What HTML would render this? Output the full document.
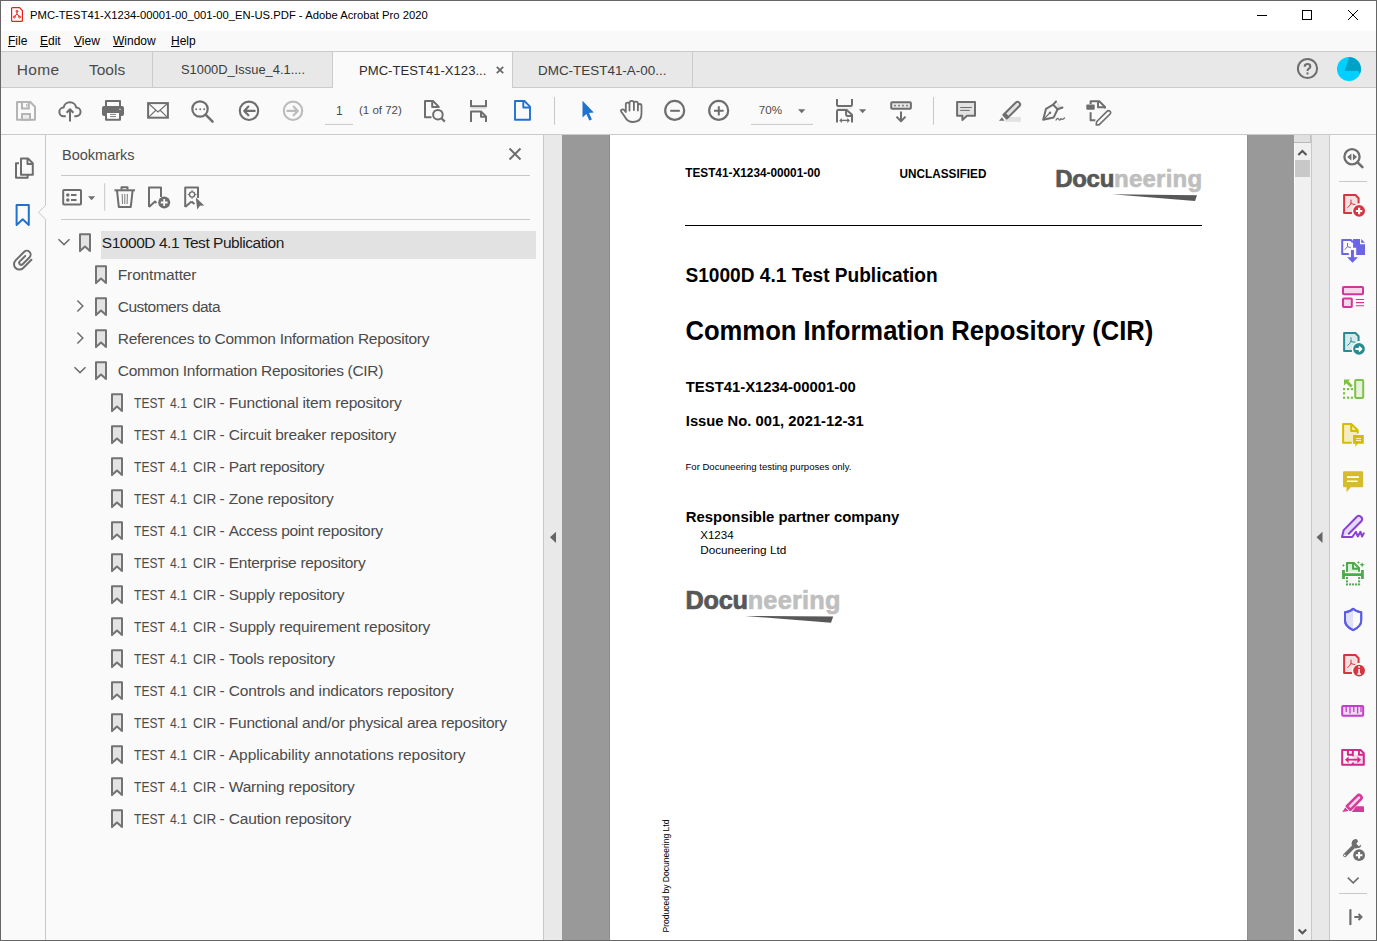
<!DOCTYPE html>
<html><head><meta charset="utf-8">
<style>
html,body{margin:0;padding:0;}
body{width:1377px;height:941px;overflow:hidden;position:relative;background:#fafafa;font-family:"Liberation Sans",sans-serif;}
.a{position:absolute;}
.t{position:absolute;white-space:pre;line-height:1;}
svg{position:absolute;overflow:visible;}
</style></head><body>
<!-- window border -->
<div class="a" style="left:0;top:0;width:1377px;height:941px;box-sizing:border-box;border:1px solid #666666;"></div>
<!-- title bar -->
<div class="a" style="left:1px;top:1px;width:1375px;height:30px;background:#fff;"></div>
<!-- menu bar -->
<div class="a" style="left:1px;top:31px;width:1375px;height:20px;background:#f9f9f9;"></div>
<!-- tab bar -->
<div class="a" style="left:1px;top:51px;width:1375px;height:1px;background:#cbcbcb;"></div>
<div class="a" style="left:1px;top:52px;width:1375px;height:35px;background:#e8e8e8;"></div>
<div class="a" style="left:1px;top:87px;width:1375px;height:1px;background:#cbcbcb;"></div>
<!-- toolbar -->
<div class="a" style="left:1px;top:88px;width:1375px;height:46px;background:#fafafa;"></div>
<div class="a" style="left:1px;top:134px;width:1375px;height:1px;background:#cbcbcb;"></div>
<!-- main -->
<div class="a" style="left:1px;top:135px;width:44px;height:805px;background:#fafafa;"></div>
<div class="a" style="left:45px;top:135px;width:1px;height:805px;background:#c8c8c8;"></div>
<div class="a" style="left:46px;top:135px;width:497px;height:805px;background:#fafafa;"></div>
<div class="a" style="left:543px;top:135px;width:1px;height:805px;background:#c8c8c8;"></div>
<div class="a" style="left:544px;top:135px;width:18px;height:805px;background:#e9e9e9;"></div>
<div class="a" style="left:562px;top:135px;width:732px;height:805px;background:#999999;"></div>
<div class="a" style="left:610px;top:135px;width:637px;height:805px;background:#ffffff;"></div>
<div class="a" style="left:609px;top:135px;width:1px;height:805px;background:#8e8e8e;"></div>
<div class="a" style="left:1247px;top:135px;width:1px;height:805px;background:#8e8e8e;"></div>
<div class="a" style="left:1294px;top:135px;width:17px;height:805px;background:#f0f0f0;"></div>
<div class="a" style="left:1311px;top:135px;width:1px;height:805px;background:#c8c8c8;"></div>
<div class="a" style="left:1312px;top:135px;width:17px;height:805px;background:#e8e8e8;"></div>
<div class="a" style="left:1329px;top:135px;width:1px;height:805px;background:#c8c8c8;"></div>
<div class="a" style="left:1330px;top:135px;width:46px;height:805px;background:#fafafa;"></div>

<!-- TITLE -->
<div class="t" style="left:30px;top:10px;font-size:11.25px;color:#000;">PMC-TEST41-X1234-00001-00_001-00_EN-US.PDF - Adobe Acrobat Pro 2020</div>

<!-- MENU -->
<div class="t" style="left:8px;top:35px;font-size:12px;color:#000;"><u>F</u>ile</div>
<div class="t" style="left:40px;top:35px;font-size:12px;color:#000;"><u>E</u>dit</div>
<div class="t" style="left:74px;top:35px;font-size:12px;color:#000;"><u>V</u>iew</div>
<div class="t" style="left:113px;top:35px;font-size:12px;color:#000;"><u>W</u>indow</div>
<div class="t" style="left:171px;top:35px;font-size:12px;color:#000;"><u>H</u>elp</div>

<!-- TABS -->
<div class="t" style="left:16.8px;top:61.8px;font-size:15.5px;letter-spacing:0.35px;color:#4b4b4b;">Home</div>
<div class="t" style="left:89px;top:61.8px;font-size:15.5px;letter-spacing:0px;color:#4b4b4b;">Tools</div>


<!-- tab dividers / active tab -->
<div class="a" style="left:152px;top:52px;width:1px;height:35px;background:#cbcbcb;"></div>
<div class="a" style="left:332px;top:52px;width:1px;height:35px;background:#cbcbcb;"></div>
<div class="a" style="left:333px;top:52px;width:179px;height:36px;background:#fafafa;"></div>
<div class="a" style="left:512px;top:52px;width:1px;height:35px;background:#cbcbcb;"></div>
<div class="a" style="left:692px;top:52px;width:1px;height:35px;background:#cbcbcb;"></div>
<div class="t" style="left:181px;top:63.5px;font-size:12.9px;color:#3c3c3c;">S1000D_Issue_4.1....</div>
<div class="t" style="left:359px;top:63.5px;font-size:13.1px;color:#2c2c2c;">PMC-TEST41-X123...</div>
<div class="t" style="left:538px;top:63.5px;font-size:13.45px;color:#3c3c3c;">DMC-TEST41-A-00...</div>
<svg width="8" height="8" style="left:496px;top:66px;"><path d="M0.8 0.8 L7.2 7.2 M7.2 0.8 L0.8 7.2" stroke="#6a6a6a" stroke-width="1.8"/></svg>
<!-- help & avatar -->
<svg width="22" height="22" style="left:1297px;top:58px;"><circle cx="10.5" cy="10.5" r="9.6" fill="none" stroke="#6e6e6e" stroke-width="2"/><path d="M7.7 8.7 Q7.7 6 10.5 6 Q13.3 6 13.3 8.4 Q13.3 10 11.6 10.8 Q10.5 11.4 10.5 13" fill="none" stroke="#6e6e6e" stroke-width="2.1"/><circle cx="10.5" cy="15.5" r="1.15" fill="#6e6e6e"/></svg>
<svg width="24" height="24" style="left:1337px;top:57px;"><circle cx="12" cy="12" r="12" fill="#00cfff"/><path d="M7.8 14 L12.1 0 A12 12 0 0 1 23 16.7 L21.3 14 Z" fill="#00a1c6"/></svg>
<!-- window controls -->
<svg width="12" height="12" style="left:1257px;top:10px;"><path d="M0 5.5 H10" stroke="#000" stroke-width="1"/></svg>
<svg width="12" height="12" style="left:1302px;top:10px;"><rect x="0.5" y="0.5" width="9" height="9" fill="none" stroke="#000" stroke-width="1"/></svg>
<svg width="12" height="12" style="left:1348px;top:10px;"><path d="M0 0 L10 10 M10 0 L0 10" stroke="#000" stroke-width="1"/></svg>
<!-- title pdf icon -->
<svg width="14" height="17" style="left:11px;top:7px;"><path d="M1.5 0.6 H8.5 L11.4 3.5 V13.4 Q11.4 14.4 10.4 14.4 H1.5 Q0.6 14.4 0.6 13.4 V1.6 Q0.6 0.6 1.5 0.6 Z" fill="#fff" stroke="#e8211c" stroke-width="1.2"/><path d="M6 4 L6 6.8 M6 6.8 L3.4 10 M6 6.8 L8.6 10" stroke="#e8211c" stroke-width="1"/><circle cx="6" cy="4.3" r="1" fill="none" stroke="#e8211c" stroke-width="0.9"/><circle cx="3.4" cy="10" r="1" fill="none" stroke="#e8211c" stroke-width="0.9"/><circle cx="8.6" cy="10" r="1" fill="none" stroke="#e8211c" stroke-width="0.9"/></svg>


<!-- TOOLBAR ICONS -->
<svg width="1377" height="941" style="left:0;top:0;" fill="none" stroke-linecap="butt">
<g stroke="#b4b4b4" stroke-width="2">
 <path d="M17 102 H30.3 L35 106.7 V119.7 H17 Z" stroke-linejoin="round"/>
 <path d="M22 102 V108.6 H28.8 V102"/>
 <path d="M26.7 104 V106.8" stroke-width="1.2"/>
 <rect x="22" y="114" width="8" height="5.7" fill="#ececec"/>
</g>
<g stroke="#6e6e6e" stroke-width="2" stroke-linejoin="round">
 <path d="M65.8 116.2 H63.7 A4.3 4.3 0 0 1 63.6 107.6 A6.4 6.4 0 0 1 76.2 107.6 A4.3 4.3 0 0 1 76.3 116.2 H74.3"/>
 <path d="M70 121.6 V109.2 M66.6 112.8 L70 109.3 L73.4 112.8" stroke-width="2"/>
</g>
<g fill="#6e6e6e">
 <path d="M104 106 H122 Q124 106 124 108 V114 Q124 116 122 116 H104 Q102 116 102 114 V108 Q102 106 104 106 Z"/>
</g>
<g stroke="#6e6e6e" stroke-width="2" stroke-linejoin="round">
 <path d="M106 106.5 V101 H120 V106.5"/>
 <rect x="106" y="112" width="14" height="7.7" fill="#fff"/>
 <path d="M110 114.4 H116 M110 116.6 H116" stroke-width="0.9"/>
</g>
<rect x="119.2" y="108.8" width="1.6" height="1" fill="#ddd"/>
<g stroke="#6e6e6e">
 <rect x="148.1" y="103.1" width="19.8" height="14.6" stroke-width="2"/>
 <path d="M148.5 103.5 L158 112 L167.5 103.5 M148.5 117.3 L155.6 110.5 M167.5 117.3 L160.4 110.5" stroke-width="1.1"/>
</g>
<g stroke="#6e6e6e">
 <circle cx="200" cy="109" r="7.7" stroke-width="2.2"/>
 <path d="M205.6 114.6 L212.6 121.6" stroke-width="2.5" stroke-linecap="round"/>
</g>
<g fill="#6e6e6e"><circle cx="196.2" cy="109.2" r="0.95"/><circle cx="200.2" cy="109.2" r="0.95"/><circle cx="204.2" cy="109.2" r="0.95"/></g>
<g stroke="#6e6e6e" stroke-width="2.1">
 <circle cx="249" cy="110.8" r="9.2"/>
 <path d="M244.2 110.9 H254.7 M248.4 106.6 L244.2 110.9 L248.4 115.2" stroke-linecap="round" stroke-linejoin="round"/>
</g>
<g stroke="#bcbcbc" stroke-width="2.1">
 <circle cx="293" cy="110.8" r="9.2"/>
 <path d="M297.8 110.9 H287.3 M293.6 106.6 L297.8 110.9 L293.6 115.2" stroke-linecap="round" stroke-linejoin="round"/>
</g>
<path d="M325 124.4 H353" stroke="#c8c8c8" stroke-width="1"/>
<g stroke="#6e6e6e" stroke-width="2" stroke-linejoin="round">
 <path d="M431.5 117.3 H425 V101 H433 L438.6 106.6 V108"/>
 <path d="M432.2 101.5 V107 H438.5"/>
 <circle cx="437.9" cy="114.7" r="4.8"/>
 <path d="M441.5 118.3 L444.8 121.6" stroke-width="2.2"/>
</g>
<g stroke="#6e6e6e" stroke-width="2" stroke-linejoin="round">
 <path d="M471 100 V106.3 H486 V100"/>
 <path d="M471 122 V111.5 H481 L486 116.5 V122"/>
 <path d="M481 112 V116.7 H486"/>
</g>
<path d="M471 108.5 H486" stroke="#e2e2e2" stroke-width="1"/>
<g stroke="#1f72cf" stroke-width="1.9" stroke-linejoin="round">
 <path d="M515 101 H524.4 L530 106.6 V119.7 H515 Z"/>
 <path d="M523.3 101.3 V107.5 H529.7"/>
</g>
<path d="M554.5 97 V124.7" stroke="#c8c8c8" stroke-width="1"/>
<path d="M582.5 100.8 L593.8 112.6 L589 112.9 L591.9 119.4 L589.3 120.6 L586.4 114.1 L582.5 117.6 Z" fill="#1f72cf"/>
<g stroke="#6e6e6e" stroke-width="1.8" stroke-linejoin="round" stroke-linecap="round">
 <path d="M629.5 110.5 V103 Q629.5 100.8 631.7 100.8 Q633.9 100.8 633.9 103 V110 M633.9 103.2 Q633.9 101.6 635.9 101.6 Q637.9 101.6 637.9 103.5 V110.5 M637.9 105.6 Q637.9 104 639.7 104 Q641.5 104 641.5 105.8 V113.5 Q641.5 122 633 122 Q627.5 122 625 117 L621.3 111.8 Q620.3 110.3 621.8 109.6 Q623.3 109 624.6 110.5 L625.8 112 V104.5 Q625.8 102.7 627.6 102.7 Q629.5 102.7 629.5 104.5"/>
</g>
<g stroke="#6e6e6e" stroke-width="2.2">
 <circle cx="674.7" cy="110.4" r="9.5"/>
 <path d="M670.2 110.8 H679.8" stroke-width="2"/>
 <circle cx="718.7" cy="110.4" r="9.5"/>
 <path d="M714 110.8 H723.6 M718.8 106.2 V115.6" stroke-width="2"/>
</g>
<path d="M751 124.4 H813" stroke="#c8c8c8" stroke-width="1"/>
<path d="M798 109.2 H805.4 L801.7 113.3 Z" fill="#6e6e6e"/>
<g stroke="#6e6e6e" stroke-width="2" stroke-linejoin="round">
 <path d="M837 99 V104.8 Q837 106 838.2 106 H850.8 Q852 106 852 104.8 V99"/>
 <path d="M837 122.6 V111.2 Q837 110 838.2 110 H846.7 L852 114.8 V122.6"/>
 <path d="M846.1 110.5 V114.8 Q846.1 115.9 847.2 115.9 H851.6"/>
 <path d="M841 120.4 H848.2" stroke-width="1.4"/>
</g>
<path d="M839.2 120.4 L841.8 117.9 V122.9 Z M849.9 120.4 L847.3 117.9 V122.9 Z" fill="#6e6e6e"/>
<path d="M837 108.3 H852" stroke="#e2e2e2" stroke-width="1"/>
<path d="M859 109.3 H866.2 L862.6 113.2 Z" fill="#6e6e6e"/>
<g stroke="#6e6e6e" stroke-width="2" stroke-linejoin="round">
 <rect x="891.2" y="102.2" width="19.7" height="6.6" rx="1" fill="#e6e6e6"/>
 <path d="M901 111.5 V121 M896.5 116.6 L901 121.2 L905.5 116.6" stroke-linejoin="round"/>
</g>
<g fill="#6e6e6e"><rect x="894.2" y="104.8" width="1.6" height="1.6"/><rect x="898.2" y="104.8" width="1.6" height="1.6"/><rect x="902.2" y="104.8" width="1.6" height="1.6"/><rect x="906.2" y="104.8" width="1.6" height="1.6"/></g>
<path d="M933.5 97 V124.7" stroke="#c8c8c8" stroke-width="1"/>
<g stroke="#6e6e6e" stroke-width="2" stroke-linejoin="round">
 <path d="M957.1 102 H975 V115.7 H967 L962.4 120 V115.7 H957.1 Z" fill="#e2e2e2"/>
 <path d="M960.2 107.5 H971.8 M960.2 110.4 H969.8" stroke-width="1"/>
</g>
<path d="M1005.2 117 H1020.9 V121.8 H1005.2 Z" fill="#e2e2e2"/>
<g stroke="#6e6e6e" stroke-width="2" stroke-linejoin="round">
 <path d="M1003.5 114.8 L1015.6 102.7 Q1017.5 100.8 1019.3 102.6 Q1021.1 104.4 1019.2 106.3 L1007.1 118.4 Z" fill="#e2e2e2"/>
</g>
<path d="M1002.5 115.6 L1006.3 119.4 L1009.2 116.5 L1005.4 112.7 Z" fill="#6e6e6e"/>
<path d="M999 120.8 L1002 117.3 L1004.5 120.8 Z" fill="#6e6e6e"/>
<g stroke="#6e6e6e" stroke-width="2" stroke-linejoin="round" stroke-linecap="round">
 <path d="M1056.2 101.2 L1062.6 107.6 L1057.8 109.1 Z" fill="#e2e2e2" stroke="none"/>
 <path d="M1056 101.5 L1053.2 104.7 L1057.6 109.2 L1062.5 107.5"/>
 <path d="M1053.2 104.7 L1046 108.8 L1043.2 119.8 L1053.6 117.6 L1057.6 109.2"/>
 <path d="M1043.8 119.2 L1049.8 113" stroke-width="1.2"/>
 <path d="M1056 120 Q1058 117 1059 119.5 Q1060 121 1061 118.5 Q1062 120.5 1064.5 118" stroke-width="1.3"/>
</g>
<circle cx="1050" cy="112.8" r="1.2" fill="#6e6e6e"/>
<g stroke="#6e6e6e" stroke-width="2" stroke-linejoin="round">
 <path d="M1090.6 104 V101.3 H1099.3 L1105 107 V108.5"/>
 <path d="M1098 101.5 V107.3 H1104.8"/>
 <path d="M1090.6 112.3 V120.2 H1095.3"/>
 <path d="M1107 111.4 Q1108.6 109.8 1110 111.2 Q1111.4 112.6 1109.8 114.2 L1099.3 124.6 L1096.2 125 L1096.6 121.8 Z" stroke-width="1.6"/>
</g>
<rect x="1086.3" y="104.5" width="8.4" height="5.2" rx="1" fill="#6e6e6e"/>
</svg>
<div class="t" style="left:336px;top:105px;font-size:12px;color:#4b4b4b;">1</div>
<div class="t" style="left:359px;top:105px;font-size:11.5px;color:#4b4b4b;">(1 of 72)</div>
<div class="t" style="left:758.8px;top:104px;font-size:11.6px;color:#4b4b4b;">70%</div>


<!-- BOOKMARKS PANEL -->
<div class="a" style="left:101px;top:231px;width:435px;height:28px;background:#e2e2e2;"></div>
<div class="t" style="left:62px;top:147.5px;font-size:14.5px;color:#4b4b4b;">Bookmarks</div>
<div class="a" style="left:61px;top:175px;width:469px;height:1px;background:#c8c8c8;"></div>
<div class="a" style="left:61px;top:219px;width:469px;height:1px;background:#c8c8c8;"></div>
<svg width="1377" height="941" style="left:0;top:0;" fill="none">
<path d="M509.5 148.5 L520.5 159.5 M520.5 148.5 L509.5 159.5" stroke="#6e6e6e" stroke-width="2"/>
<g stroke="#6e6e6e" stroke-width="2">
 <rect x="63.2" y="190" width="17.8" height="14.6" rx="0.8"/>
 <path d="M71 194.9 H76.5 M71 200 H76.5" stroke-width="2"/>
</g>
<circle cx="67.8" cy="194.9" r="1.75" fill="#6e6e6e"/><circle cx="67.8" cy="200" r="1.75" fill="#6e6e6e"/>
<path d="M88 196.2 H95.2 L91.6 200.2 Z" fill="#6e6e6e"/>
<path d="M104.7 183.3 V210.8" stroke="#c8c8c8" stroke-width="1"/>
<g stroke="#6e6e6e" stroke-width="2" stroke-linejoin="round">
 <path d="M114.5 190.3 H135"/>
 <path d="M121.5 189.8 V187.2 H127.5 V189.8"/>
 <path d="M117 190.5 L118.8 206.9 H130.8 L132.6 190.5"/>
 <path d="M122.2 194 L122.5 204 M124.8 194 V204 M127.4 194 L127.1 204" stroke-width="0.9"/>
</g>
<g stroke="#6e6e6e" stroke-width="2" stroke-linejoin="round">
 <path d="M149 207 V187.4 H161 V197 M156.5 203 L155 201.6 L149 207"/>
</g>
<circle cx="164.2" cy="202.5" r="6" fill="#6e6e6e"/>
<path d="M160.8 202.5 H167.6 M164.2 199.1 V205.9" stroke="#fafafa" stroke-width="1.8"/>
<g stroke="#6e6e6e" stroke-width="2" stroke-linejoin="round">
 <path d="M185.2 207 V187.4 H198 V198 M191.5 201.6 L185.2 207 M191.5 201.6 L194.5 204"/>
 <circle cx="192.1" cy="194.5" r="2.6" stroke-width="1.4"/>
 <path d="M192.1 190.2 V191.6 M192.1 197.4 V198.8 M187.8 194.5 H189.2 M195 194.5 H196.4" stroke-width="1.2"/>
</g>
<path d="M195.8 197.5 L204.2 205.6 L200 205.8 L197.2 209.5 Z" fill="#6e6e6e"/>
<path d="M80 251.1 V234.3 H90 V251.1 L85.0 246.5 Z" fill="#e3e3e3" stroke="#737373" stroke-width="2" stroke-linejoin="round"/>
<path d="M58.5 239.2 L64 244.6 L69.5 239.2" fill="none" stroke="#6e6e6e" stroke-width="1.5"/>
<path d="M96 283.09999999999997 V266.3 H106 V283.09999999999997 L101.0 278.5 Z" fill="#e3e3e3" stroke="#737373" stroke-width="2" stroke-linejoin="round"/>
<path d="M96 315.09999999999997 V298.3 H106 V315.09999999999997 L101.0 310.5 Z" fill="#e3e3e3" stroke="#737373" stroke-width="2" stroke-linejoin="round"/>
<path d="M77.4 300.5 L82.8 306 L77.4 311.5" fill="none" stroke="#6e6e6e" stroke-width="1.5"/>
<path d="M96 347.09999999999997 V330.3 H106 V347.09999999999997 L101.0 342.5 Z" fill="#e3e3e3" stroke="#737373" stroke-width="2" stroke-linejoin="round"/>
<path d="M77.4 332.5 L82.8 338 L77.4 343.5" fill="none" stroke="#6e6e6e" stroke-width="1.5"/>
<path d="M96 379.09999999999997 V362.3 H106 V379.09999999999997 L101.0 374.5 Z" fill="#e3e3e3" stroke="#737373" stroke-width="2" stroke-linejoin="round"/>
<path d="M74.5 367.2 L80 372.6 L85.5 367.2" fill="none" stroke="#6e6e6e" stroke-width="1.5"/>
<path d="M112 411.09999999999997 V394.3 H122 V411.09999999999997 L117.0 406.5 Z" fill="#e3e3e3" stroke="#737373" stroke-width="2" stroke-linejoin="round"/>
<path d="M112 443.09999999999997 V426.3 H122 V443.09999999999997 L117.0 438.5 Z" fill="#e3e3e3" stroke="#737373" stroke-width="2" stroke-linejoin="round"/>
<path d="M112 475.09999999999997 V458.3 H122 V475.09999999999997 L117.0 470.5 Z" fill="#e3e3e3" stroke="#737373" stroke-width="2" stroke-linejoin="round"/>
<path d="M112 507.09999999999997 V490.3 H122 V507.09999999999997 L117.0 502.5 Z" fill="#e3e3e3" stroke="#737373" stroke-width="2" stroke-linejoin="round"/>
<path d="M112 539.1 V522.3 H122 V539.1 L117.0 534.5 Z" fill="#e3e3e3" stroke="#737373" stroke-width="2" stroke-linejoin="round"/>
<path d="M112 571.1 V554.3 H122 V571.1 L117.0 566.5 Z" fill="#e3e3e3" stroke="#737373" stroke-width="2" stroke-linejoin="round"/>
<path d="M112 603.1 V586.3 H122 V603.1 L117.0 598.5 Z" fill="#e3e3e3" stroke="#737373" stroke-width="2" stroke-linejoin="round"/>
<path d="M112 635.1 V618.3 H122 V635.1 L117.0 630.5 Z" fill="#e3e3e3" stroke="#737373" stroke-width="2" stroke-linejoin="round"/>
<path d="M112 667.1 V650.3 H122 V667.1 L117.0 662.5 Z" fill="#e3e3e3" stroke="#737373" stroke-width="2" stroke-linejoin="round"/>
<path d="M112 699.1 V682.3 H122 V699.1 L117.0 694.5 Z" fill="#e3e3e3" stroke="#737373" stroke-width="2" stroke-linejoin="round"/>
<path d="M112 731.1 V714.3 H122 V731.1 L117.0 726.5 Z" fill="#e3e3e3" stroke="#737373" stroke-width="2" stroke-linejoin="round"/>
<path d="M112 763.1 V746.3 H122 V763.1 L117.0 758.5 Z" fill="#e3e3e3" stroke="#737373" stroke-width="2" stroke-linejoin="round"/>
<path d="M112 795.1 V778.3 H122 V795.1 L117.0 790.5 Z" fill="#e3e3e3" stroke="#737373" stroke-width="2" stroke-linejoin="round"/>
<path d="M112 827.1 V810.3 H122 V827.1 L117.0 822.5 Z" fill="#e3e3e3" stroke="#737373" stroke-width="2" stroke-linejoin="round"/>
</svg>
<!--BMTEXT-->
<div class="t" style="left:101.8px;top:234.9px;font-size:15.5px;color:#1c1c1c;letter-spacing:-0.459px;">S1000D 4.1 Test Publication</div>
<div class="t" style="left:117.8px;top:266.9px;font-size:15.5px;color:#4b4b4b;letter-spacing:-0.145px;">Frontmatter</div>
<div class="t" style="left:117.8px;top:298.9px;font-size:15.5px;color:#4b4b4b;letter-spacing:-0.514px;">Customers data</div>
<div class="t" style="left:117.8px;top:330.9px;font-size:15.5px;color:#4b4b4b;letter-spacing:-0.293px;">References to Common Information Repository</div>
<div class="t" style="left:117.8px;top:362.9px;font-size:15.5px;color:#4b4b4b;letter-spacing:-0.303px;">Common Information Repositories (CIR)</div>
<div class="t" style="left:134.4px;top:394.9px;font-size:15.5px;color:#4b4b4b;transform:scaleX(0.78);transform-origin:0 0;">TEST</div>
<div class="t" style="left:170.1px;top:394.9px;font-size:15.5px;color:#4b4b4b;transform:scaleX(0.79);transform-origin:0 0;">4.1</div>
<div class="t" style="left:192.6px;top:394.9px;font-size:15.5px;color:#4b4b4b;transform:scaleX(0.87);transform-origin:0 0;">CIR</div>
<div class="t" style="left:219.6px;top:394.9px;font-size:15.5px;color:#4b4b4b;transform:scaleX(1.0);transform-origin:0 0;">-</div>
<div class="t" style="left:228.8px;top:394.9px;font-size:15.5px;color:#4b4b4b;letter-spacing:-0.185px;">Functional item repository</div>
<div class="t" style="left:134.4px;top:426.9px;font-size:15.5px;color:#4b4b4b;transform:scaleX(0.78);transform-origin:0 0;">TEST</div>
<div class="t" style="left:170.1px;top:426.9px;font-size:15.5px;color:#4b4b4b;transform:scaleX(0.79);transform-origin:0 0;">4.1</div>
<div class="t" style="left:192.6px;top:426.9px;font-size:15.5px;color:#4b4b4b;transform:scaleX(0.87);transform-origin:0 0;">CIR</div>
<div class="t" style="left:219.6px;top:426.9px;font-size:15.5px;color:#4b4b4b;transform:scaleX(1.0);transform-origin:0 0;">-</div>
<div class="t" style="left:228.8px;top:426.9px;font-size:15.5px;color:#4b4b4b;letter-spacing:-0.231px;">Circuit breaker repository</div>
<div class="t" style="left:134.4px;top:458.9px;font-size:15.5px;color:#4b4b4b;transform:scaleX(0.78);transform-origin:0 0;">TEST</div>
<div class="t" style="left:170.1px;top:458.9px;font-size:15.5px;color:#4b4b4b;transform:scaleX(0.79);transform-origin:0 0;">4.1</div>
<div class="t" style="left:192.6px;top:458.9px;font-size:15.5px;color:#4b4b4b;transform:scaleX(0.87);transform-origin:0 0;">CIR</div>
<div class="t" style="left:219.6px;top:458.9px;font-size:15.5px;color:#4b4b4b;transform:scaleX(1.0);transform-origin:0 0;">-</div>
<div class="t" style="left:228.8px;top:458.9px;font-size:15.5px;color:#4b4b4b;letter-spacing:-0.360px;">Part repository</div>
<div class="t" style="left:134.4px;top:490.9px;font-size:15.5px;color:#4b4b4b;transform:scaleX(0.78);transform-origin:0 0;">TEST</div>
<div class="t" style="left:170.1px;top:490.9px;font-size:15.5px;color:#4b4b4b;transform:scaleX(0.79);transform-origin:0 0;">4.1</div>
<div class="t" style="left:192.6px;top:490.9px;font-size:15.5px;color:#4b4b4b;transform:scaleX(0.87);transform-origin:0 0;">CIR</div>
<div class="t" style="left:219.6px;top:490.9px;font-size:15.5px;color:#4b4b4b;transform:scaleX(1.0);transform-origin:0 0;">-</div>
<div class="t" style="left:228.8px;top:490.9px;font-size:15.5px;color:#4b4b4b;letter-spacing:-0.200px;">Zone repository</div>
<div class="t" style="left:134.4px;top:522.9px;font-size:15.5px;color:#4b4b4b;transform:scaleX(0.78);transform-origin:0 0;">TEST</div>
<div class="t" style="left:170.1px;top:522.9px;font-size:15.5px;color:#4b4b4b;transform:scaleX(0.79);transform-origin:0 0;">4.1</div>
<div class="t" style="left:192.6px;top:522.9px;font-size:15.5px;color:#4b4b4b;transform:scaleX(0.87);transform-origin:0 0;">CIR</div>
<div class="t" style="left:219.6px;top:522.9px;font-size:15.5px;color:#4b4b4b;transform:scaleX(1.0);transform-origin:0 0;">-</div>
<div class="t" style="left:228.8px;top:522.9px;font-size:15.5px;color:#4b4b4b;letter-spacing:-0.270px;">Access point repository</div>
<div class="t" style="left:134.4px;top:554.9px;font-size:15.5px;color:#4b4b4b;transform:scaleX(0.78);transform-origin:0 0;">TEST</div>
<div class="t" style="left:170.1px;top:554.9px;font-size:15.5px;color:#4b4b4b;transform:scaleX(0.79);transform-origin:0 0;">4.1</div>
<div class="t" style="left:192.6px;top:554.9px;font-size:15.5px;color:#4b4b4b;transform:scaleX(0.87);transform-origin:0 0;">CIR</div>
<div class="t" style="left:219.6px;top:554.9px;font-size:15.5px;color:#4b4b4b;transform:scaleX(1.0);transform-origin:0 0;">-</div>
<div class="t" style="left:228.8px;top:554.9px;font-size:15.5px;color:#4b4b4b;letter-spacing:-0.305px;">Enterprise repository</div>
<div class="t" style="left:134.4px;top:586.9px;font-size:15.5px;color:#4b4b4b;transform:scaleX(0.78);transform-origin:0 0;">TEST</div>
<div class="t" style="left:170.1px;top:586.9px;font-size:15.5px;color:#4b4b4b;transform:scaleX(0.79);transform-origin:0 0;">4.1</div>
<div class="t" style="left:192.6px;top:586.9px;font-size:15.5px;color:#4b4b4b;transform:scaleX(0.87);transform-origin:0 0;">CIR</div>
<div class="t" style="left:219.6px;top:586.9px;font-size:15.5px;color:#4b4b4b;transform:scaleX(1.0);transform-origin:0 0;">-</div>
<div class="t" style="left:228.8px;top:586.9px;font-size:15.5px;color:#4b4b4b;letter-spacing:-0.247px;">Supply repository</div>
<div class="t" style="left:134.4px;top:618.9px;font-size:15.5px;color:#4b4b4b;transform:scaleX(0.78);transform-origin:0 0;">TEST</div>
<div class="t" style="left:170.1px;top:618.9px;font-size:15.5px;color:#4b4b4b;transform:scaleX(0.79);transform-origin:0 0;">4.1</div>
<div class="t" style="left:192.6px;top:618.9px;font-size:15.5px;color:#4b4b4b;transform:scaleX(0.87);transform-origin:0 0;">CIR</div>
<div class="t" style="left:219.6px;top:618.9px;font-size:15.5px;color:#4b4b4b;transform:scaleX(1.0);transform-origin:0 0;">-</div>
<div class="t" style="left:228.8px;top:618.9px;font-size:15.5px;color:#4b4b4b;letter-spacing:-0.186px;">Supply requirement repository</div>
<div class="t" style="left:134.4px;top:650.9px;font-size:15.5px;color:#4b4b4b;transform:scaleX(0.78);transform-origin:0 0;">TEST</div>
<div class="t" style="left:170.1px;top:650.9px;font-size:15.5px;color:#4b4b4b;transform:scaleX(0.79);transform-origin:0 0;">4.1</div>
<div class="t" style="left:192.6px;top:650.9px;font-size:15.5px;color:#4b4b4b;transform:scaleX(0.87);transform-origin:0 0;">CIR</div>
<div class="t" style="left:219.6px;top:650.9px;font-size:15.5px;color:#4b4b4b;transform:scaleX(1.0);transform-origin:0 0;">-</div>
<div class="t" style="left:228.8px;top:650.9px;font-size:15.5px;color:#4b4b4b;letter-spacing:-0.163px;">Tools repository</div>
<div class="t" style="left:134.4px;top:682.9px;font-size:15.5px;color:#4b4b4b;transform:scaleX(0.78);transform-origin:0 0;">TEST</div>
<div class="t" style="left:170.1px;top:682.9px;font-size:15.5px;color:#4b4b4b;transform:scaleX(0.79);transform-origin:0 0;">4.1</div>
<div class="t" style="left:192.6px;top:682.9px;font-size:15.5px;color:#4b4b4b;transform:scaleX(0.87);transform-origin:0 0;">CIR</div>
<div class="t" style="left:219.6px;top:682.9px;font-size:15.5px;color:#4b4b4b;transform:scaleX(1.0);transform-origin:0 0;">-</div>
<div class="t" style="left:228.8px;top:682.9px;font-size:15.5px;color:#4b4b4b;letter-spacing:-0.182px;">Controls and indicators repository</div>
<div class="t" style="left:134.4px;top:714.9px;font-size:15.5px;color:#4b4b4b;transform:scaleX(0.78);transform-origin:0 0;">TEST</div>
<div class="t" style="left:170.1px;top:714.9px;font-size:15.5px;color:#4b4b4b;transform:scaleX(0.79);transform-origin:0 0;">4.1</div>
<div class="t" style="left:192.6px;top:714.9px;font-size:15.5px;color:#4b4b4b;transform:scaleX(0.87);transform-origin:0 0;">CIR</div>
<div class="t" style="left:219.6px;top:714.9px;font-size:15.5px;color:#4b4b4b;transform:scaleX(1.0);transform-origin:0 0;">-</div>
<div class="t" style="left:228.8px;top:714.9px;font-size:15.5px;color:#4b4b4b;letter-spacing:-0.233px;">Functional and/or physical area repository</div>
<div class="t" style="left:134.4px;top:746.9px;font-size:15.5px;color:#4b4b4b;transform:scaleX(0.78);transform-origin:0 0;">TEST</div>
<div class="t" style="left:170.1px;top:746.9px;font-size:15.5px;color:#4b4b4b;transform:scaleX(0.79);transform-origin:0 0;">4.1</div>
<div class="t" style="left:192.6px;top:746.9px;font-size:15.5px;color:#4b4b4b;transform:scaleX(0.87);transform-origin:0 0;">CIR</div>
<div class="t" style="left:219.6px;top:746.9px;font-size:15.5px;color:#4b4b4b;transform:scaleX(1.0);transform-origin:0 0;">-</div>
<div class="t" style="left:228.8px;top:746.9px;font-size:15.5px;color:#4b4b4b;letter-spacing:-0.056px;">Applicability annotations repository</div>
<div class="t" style="left:134.4px;top:778.9px;font-size:15.5px;color:#4b4b4b;transform:scaleX(0.78);transform-origin:0 0;">TEST</div>
<div class="t" style="left:170.1px;top:778.9px;font-size:15.5px;color:#4b4b4b;transform:scaleX(0.79);transform-origin:0 0;">4.1</div>
<div class="t" style="left:192.6px;top:778.9px;font-size:15.5px;color:#4b4b4b;transform:scaleX(0.87);transform-origin:0 0;">CIR</div>
<div class="t" style="left:219.6px;top:778.9px;font-size:15.5px;color:#4b4b4b;transform:scaleX(1.0);transform-origin:0 0;">-</div>
<div class="t" style="left:228.8px;top:778.9px;font-size:15.5px;color:#4b4b4b;letter-spacing:-0.211px;">Warning repository</div>
<div class="t" style="left:134.4px;top:810.9px;font-size:15.5px;color:#4b4b4b;transform:scaleX(0.78);transform-origin:0 0;">TEST</div>
<div class="t" style="left:170.1px;top:810.9px;font-size:15.5px;color:#4b4b4b;transform:scaleX(0.79);transform-origin:0 0;">4.1</div>
<div class="t" style="left:192.6px;top:810.9px;font-size:15.5px;color:#4b4b4b;transform:scaleX(0.87);transform-origin:0 0;">CIR</div>
<div class="t" style="left:219.6px;top:810.9px;font-size:15.5px;color:#4b4b4b;transform:scaleX(1.0);transform-origin:0 0;">-</div>
<div class="t" style="left:228.8px;top:810.9px;font-size:15.5px;color:#4b4b4b;letter-spacing:-0.189px;">Caution repository</div>
<!--/BMTEXT-->
<!-- LEFT NAV -->
<svg width="1377" height="941" style="left:0;top:0;" fill="none">
<g stroke="#6e6e6e" stroke-width="2" stroke-linejoin="round">
 <path d="M21 158.5 H28 L32.8 163.3 V174.8 H21 Z"/>
 <path d="M27.5 158.8 V164 H32.5"/>
 <path d="M19 163.2 H16 V177.7 H27.6 V175"/>
</g>
<path d="M16.6 204.9 H28.8 V225 L22.7 219.3 L16.6 225 Z" stroke="#1f72cf" stroke-width="2" stroke-linejoin="round"/>
<path d="M31.4 259.8 L23.2 268 A5.37 5.37 0 0 1 15.6 260.4 L24.2 251.8 A3.82 3.82 0 0 1 29.6 257.2 L22.6 264.2 A1.98 1.98 0 0 1 19.8 261.4 L25.2 256" stroke="#6e6e6e" stroke-width="2" stroke-linecap="round"/>
<path d="M46 205.3 L38.5 212.3 L46 219.4 Z" fill="#fafafa"/><path d="M45.5 205.5 L38.5 212.3 L45.5 219.2" stroke="#c8c8c8" stroke-width="1"/>
<path d="M550 537.3 L556 531.8 V542.9 Z" fill="#666"/>
<path d="M1316.5 537.3 L1322.5 531.8 V542.9 Z" fill="#666"/>
</svg>


<!-- SCROLLBAR -->
<div class="a" style="left:1294px;top:135px;width:1px;height:805px;background:#fcfcfc;"></div>
<div class="a" style="left:1294px;top:135px;width:17px;height:8px;background:#e0e0e0;box-sizing:border-box;border-right:1px solid #c0c0c0;border-bottom:1px solid #b8b8b8;"></div>
<div class="a" style="left:1295px;top:160px;width:15px;height:17px;background:#c8c8c8;"></div>
<!-- RIGHT PANEL -->
<svg width="1377" height="941" style="left:0;top:0;" fill="none">
<path d="M1298.3 155 L1302.4 151 L1306.5 155" stroke="#555" stroke-width="2"/>
<path d="M1298.6 929.5 L1302.4 933.3 L1306.2 929.5" stroke="#555" stroke-width="2"/>
<!-- search -->
<circle cx="1352" cy="156.8" r="7.6" stroke="#6e6e6e" stroke-width="2.3"/>
<path d="M1357.6 162.4 L1362.4 167.2" stroke="#6e6e6e" stroke-width="2.6" stroke-linecap="round"/>
<path d="M1351.4 153.6 L1347.2 157 L1351.4 160.4 Z M1352.9 153.6 L1357.1 157 L1352.9 160.4 Z" fill="#6e6e6e"/>
<path d="M1339 181.5 H1367" stroke="#c8c8c8" stroke-width="1"/>
<!-- create pdf -->
<g stroke="#d6343f" stroke-width="2" stroke-linejoin="round">
 <path d="M1351.9 212.9 H1344.1 V195 H1355.5 L1358.6 198.3 V203.4" fill="#f4dfe1"/>
</g>
<path d="M1351 199.6 V203.2 Q1350 206 1347.3 207.8 M1350.9 203.4 Q1353 204.5 1355.5 204.5" stroke="#d6343f" stroke-width="1"/>
<circle cx="1359.1" cy="210.9" r="7.2" fill="#fafafa"/>
<circle cx="1359.1" cy="210.9" r="5.9" fill="#d6343f"/>
<path d="M1355.9 211 H1362.3 M1359.1 207.8 V214.2" stroke="#fff" stroke-width="2.2"/>
<!-- combine -->
<g stroke="#6b63e8" stroke-width="2" stroke-linejoin="round">
 <path d="M1348.8 254 H1342.2 V240 H1350.8 L1353 242.3"/>
</g>
<path d="M1353.1 239 H1360 V244.2 H1365 V254.9 H1356.2 V247.8 H1353.1 Z M1361.2 239 L1365 242.8 H1361.2 Z" fill="#6b63e8"/>
<path d="M1351 250.1 H1353.9 V257.3 H1357.9 L1352.5 262.7 L1347.1 257.3 H1351 Z" fill="#6b63e8"/>
<path d="M1347.5 243 V246.3 Q1346.5 248.5 1344.6 249.6 M1347.5 246.5 Q1349 247.5 1350.8 247.4" stroke="#6b63e8" stroke-width="1"/>
<!-- organize -->
<g stroke="#d2359b" stroke-width="2" stroke-linejoin="round">
 <rect x="1343" y="287" width="20" height="7.2" rx="0.8" fill="#f3d9ea"/>
 <rect x="1343" y="298.5" width="8.8" height="8.6" rx="0.8" fill="#f3d9ea"/>
 <path d="M1355.8 299.5 H1364 M1355.8 302.6 H1364 M1355.8 305.7 H1364" stroke-width="1.1"/>
</g>
<!-- export pdf -->
<g stroke="#2a8a93" stroke-width="2" stroke-linejoin="round">
 <path d="M1351.9 351 H1344.1 V333 H1355.5 L1358.6 336.3 V341" fill="#d6e9eb"/>
</g>
<path d="M1351 337.3 V341 Q1350 343.8 1347.3 345.6 M1350.9 341.2 Q1353 342.3 1355.5 342.3" stroke="#2a8a93" stroke-width="1"/>
<circle cx="1359" cy="348.9" r="7.2" fill="#fafafa"/>
<circle cx="1359" cy="348.9" r="5.9" fill="#2a8a93"/>
<path d="M1355.4 349 H1361 M1359 346.6 L1361.4 349 L1359 351.4" stroke="#fff" stroke-width="1.8" stroke-linejoin="round"/>
<!-- compress/crop green -->
<rect x="1355.2" y="380.1" width="8" height="17.8" rx="0.8" fill="#e6f2db" stroke="#7cc242" stroke-width="2"/>
<g fill="#7cc242">
 <rect x="1343" y="388" width="2.2" height="2.2"/><rect x="1347" y="388" width="2.2" height="2.2"/><rect x="1350.8" y="388" width="2.2" height="2.2"/>
 <rect x="1343" y="392.2" width="2.2" height="2.2"/><rect x="1343" y="396.6" width="2.2" height="2.2"/>
 <rect x="1347" y="396.6" width="2.2" height="2.2"/><rect x="1350.8" y="396.6" width="2.2" height="2.2"/>
</g>
<path d="M1344 379.4 H1350.2 L1348.3 381.3 L1352.6 385.6 L1350.6 387.6 L1346.3 383.3 L1344 385.6 Z" fill="#7cc242"/>
<!-- send for comments -->
<g stroke="#d6bb00" stroke-width="2" stroke-linejoin="round">
 <path d="M1351.7 442.7 H1343.1 V424.1 H1351.5 L1357.7 430.3 V433.6" fill="#f3ecc4"/>
 <path d="M1351.2 424.4 V431 H1357.5"/>
</g>
<path d="M1353.1 434.9 H1363.8 V443.8 H1357.8 L1355.4 446.7 V443.8 H1353.1 Z" fill="#d6bb00"/>
<path d="M1356 438.6 H1361 M1356 440.6 H1361" stroke="#fff" stroke-width="0.9"/>
<!-- comment -->
<path d="M1344.3 471.2 H1362 Q1363.2 471.2 1363.2 472.4 V486 Q1363.2 487.3 1362 487.3 H1350.8 L1346.5 492.2 V487.3 H1344.3 Q1343 487.3 1343 486 V472.4 Q1343 471.2 1344.3 471.2 Z" fill="#d5bb2e"/>
<path d="M1347 477.1 H1359 M1347 481.3 H1357.6" stroke="#fff" stroke-width="1.6"/>
<!-- fill & sign -->
<path d="M1343.7 530.1 L1356.8 516.7 Q1359 514.8 1361.2 517 Q1363.2 519.2 1361.3 521.3 L1348.8 533.8 L1342 537 Z" fill="#e6d9f5"/>
<path d="M1348.8 533.8 L1361.3 521.3 Q1363.2 519.2 1361.2 517 Q1359 514.8 1356.8 516.7 L1343.7 530.1 L1342 537 H1352.3 L1355.9 531.8 L1357.8 536.5 L1360.5 531.8 L1362 536.5 L1363.8 533.3" stroke="#8a3fd6" stroke-width="2" stroke-linejoin="round" stroke-linecap="round"/>
<!-- print production -->
<g stroke="#4caa48" stroke-width="2" stroke-linejoin="round">
 <path d="M1347 571.8 V562.9 H1353.9 L1359 568 V571.8" fill="#dcefdc"/>
 <path d="M1353 563.2 V568.8 H1358.8"/>
</g>
<path d="M1342.1 570.1 H1344.9 V573.3 H1361.1 V570.1 H1363.8 V579 H1361.1 V576.1 H1344.9 V579 H1342.1 Z" fill="#4caa48"/>
<g fill="#4caa48"><rect x="1346" y="577.1" width="2" height="2"/><rect x="1346" y="580.4" width="2" height="2"/><rect x="1346" y="583.4" width="2" height="2"/><rect x="1358.1" y="577.1" width="2" height="2"/><rect x="1358.1" y="580.4" width="2" height="2"/><rect x="1358.1" y="583.4" width="2" height="2"/><rect x="1349.1" y="583.4" width="2" height="2"/><rect x="1352.1" y="583.4" width="2" height="2"/><rect x="1355.1" y="583.4" width="2" height="2"/></g>
<path d="M1343.4 563.8 L1343.88 564.92 L1345.0 565.4 L1343.88 565.88 L1343.4 567.0 L1342.92 565.88 L1341.8000000000002 565.4 L1342.92 564.92 Z M1358.4 560.8 L1358.88 561.92 L1360.0 562.4 L1358.88 562.88 L1358.4 564.0 L1357.92 562.88 L1356.8000000000002 562.4 L1357.92 561.92 Z M1362.1 562.1999999999999 L1362.8799999999999 564.02 L1364.6999999999998 564.8 L1362.8799999999999 565.5799999999999 L1362.1 567.4 L1361.32 565.5799999999999 L1359.5 564.8 L1361.32 564.02 Z" fill="#4caa48"/>
<!-- protect -->
<path d="M1353.1 608.8 Q1357.5 612.5 1361.2 612.3 V620.5 Q1361.2 626.3 1353.1 630.2 Q1345 626.3 1345 620.5 V612.3 Q1348.7 612.5 1353.1 608.8 Z" fill="#e0e0f7" stroke="#5b5bea" stroke-width="2" stroke-linejoin="round"/>
<path d="M1353.1 609.5 V629.5 Q1360.4 626 1360.4 620.5 V612.9 Q1356.8 612.9 1353.1 609.5 Z" fill="#fafafa"/>
<path d="M1353.1 608.8 Q1357.5 612.5 1361.2 612.3 V620.5 Q1361.2 626.3 1353.1 630.2 Q1345 626.3 1345 620.5 V612.3 Q1348.7 612.5 1353.1 608.8 Z" stroke="#5b5bea" stroke-width="2" stroke-linejoin="round"/>
<!-- pdf info -->
<g stroke="#d6343f" stroke-width="2" stroke-linejoin="round">
 <path d="M1351.9 673 H1344.1 V655 H1355.5 L1358.6 658.3 V663" fill="#f4dfe1"/>
</g>
<path d="M1351 659.6 V663.2 Q1350 666 1347.3 667.8 M1350.9 663.4 Q1353 664.5 1355.5 664.5" stroke="#d6343f" stroke-width="1"/>
<circle cx="1359.1" cy="670.6" r="7.2" fill="#fafafa"/>
<circle cx="1359.1" cy="670.6" r="5.9" fill="#d6343f"/>
<path d="M1359.1 669 V674 M1357.4 674 H1360.8" stroke="#fff" stroke-width="1.6"/>
<circle cx="1359.1" cy="667" r="0.9" fill="#fff"/>
<!-- measure -->
<rect x="1342.2" y="706" width="21" height="9.7" rx="1" fill="#f1d8f2" stroke="#c43ccc" stroke-width="2"/>
<path d="M1346.2 707 V712 M1350 707 V713.5 M1353.8 707 V712 M1357.6 707 V713.5 M1361 707 V712" stroke="#c43ccc" stroke-width="1.3"/>
<!-- compare -->
<rect x="1353" y="754.5" width="10" height="9.5" fill="#f5d6ea"/>
<g stroke="#d0288f" stroke-width="2" stroke-linejoin="round">
 <path d="M1352.8 750 H1342.2 V764.8 H1363.8 V753.2 L1360.6 750 H1352.8"/>
 <path d="M1347.9 750.3 V754.8 H1352.7"/>
 <path d="M1358.9 750.3 V754.8 H1363.5"/>
 <path d="M1352.8 750 V756.3 M1352.8 762.6 V764"/>
 <path d="M1347.5 759.7 H1358.5" stroke-width="1.8"/>
</g>
<path d="M1345 759.8 L1348.6 756.4 V763.2 Z M1361 759.8 L1357.4 756.4 V763.2 Z" fill="#d0288f"/>
<!-- highlighter pink -->
<path d="M1346.8 806.2 L1357.2 795.8 Q1359 794 1360.8 795.8 Q1362.6 797.6 1360.8 799.4 L1350.4 809.8 Z" fill="#f3d6ea" stroke="#d63a9b" stroke-width="2.6" stroke-linejoin="round"/>
<path d="M1342.3 812 L1345.2 807.6 L1348.6 811 Z" fill="#d63a9b"/>
<path d="M1351.8 812 L1356 806.2 H1363 Q1364 806.2 1364 807.2 V812 Z" fill="#d63a9b"/>
<!-- wrench + plus -->
<path d="M1355.6 839 Q1352 839.5 1351.6 843.2 Q1351.5 844.5 1352 845.5 L1343.6 853.9 Q1342.3 855.2 1343.6 856.6 Q1345 857.9 1346.3 856.6 L1354.7 848.2 Q1355.8 848.7 1357 848.6 Q1360.9 848.2 1361.3 844.5 L1358.8 846.2 L1356.3 843.8 L1358.2 841.2 Q1357 838.8 1355.6 839 Z" fill="#6e6e6e"/>
<circle cx="1344.8" cy="855.3" r="0.9" fill="#fafafa"/>
<circle cx="1359.1" cy="855.2" r="7.2" fill="#fafafa"/>
<circle cx="1359.1" cy="855.2" r="5.9" fill="#6e6e6e"/>
<path d="M1355.8 855.2 H1362.4 M1359.1 851.9 V858.5" stroke="#fff" stroke-width="2"/>
<!-- chevron -->
<path d="M1347.8 877.6 L1353.2 882.8 L1358.6 877.6" stroke="#6e6e6e" stroke-width="1.6"/>
<path d="M1339 893.5 H1367" stroke="#c8c8c8" stroke-width="1"/>
<path d="M1350.4 910 V924.2" stroke="#6e6e6e" stroke-width="2.2" stroke-linecap="round"/>
<path d="M1354.3 917 H1361.5 M1358.5 914 L1361.6 917 L1358.5 920" stroke="#6e6e6e" stroke-width="2" stroke-linejoin="round"/>
</svg>

<!-- PAGE -->
<div class="t" style="left:685.2px;top:168.01px;font-size:11.8px;font-weight:700;color:#000;transform:scaleY(1.1);transform-origin:0 9.99px;">TEST41-X1234-00001-00</div>
<div class="t" style="left:899.6px;top:168.05px;font-size:11.75px;font-weight:700;color:#000;transform:scaleY(1.1);transform-origin:0 9.95px;">UNCLASSIFIED</div>
<div class="a" style="left:685px;top:225px;width:517px;height:1px;background:#000;"></div>
<div class="t" style="left:685.5px;top:265.73px;font-size:19.1px;font-weight:700;color:#000;transform:scaleY(1.09);transform-origin:0 16.17px;">S1000D 4.1 Test Publication</div>
<div class="t" style="left:685.5px;top:319.33px;font-size:25.6px;font-weight:700;color:#000;transform:scaleY(1.045);transform-origin:0 21.67px;">Common Information Repository (CIR)</div>
<div class="t" style="left:685.8px;top:380.43px;font-size:14.85px;font-weight:700;color:#000;transform:scaleY(1.03);transform-origin:0 12.57px;">TEST41-X1234-00001-00</div>
<div class="t" style="left:685.8px;top:413.51px;font-size:14.75px;font-weight:700;color:#000;transform:scaleY(1.05);transform-origin:0 12.49px;">Issue No. 001, 2021-12-31</div>
<div class="t" style="left:685.5px;top:462.31px;font-size:9.56px;font-weight:400;color:#000;">For Docuneering testing purposes only.</div>
<div class="t" style="left:685.8px;top:510.4px;font-size:14.9px;font-weight:700;color:#000;">Responsible partner company</div>
<div class="t" style="left:700.2px;top:530.22px;font-size:11.55px;font-weight:400;color:#000;">X1234</div>
<div class="t" style="left:700.2px;top:544.08px;font-size:11.72px;font-weight:400;color:#000;">Docuneering Ltd</div>
<div class="t" style="left:1055.2px;top:167.1px;font-size:24px;font-weight:700;-webkit-text-stroke:0.7px;"><span style="color:#575757;-webkit-text-stroke-color:#575757;letter-spacing:-0.3px">Docu</span><span style="color:#bfbfbf;-webkit-text-stroke-color:#bfbfbf;letter-spacing:0.25px">neering</span></div>
<div class="t" style="left:685.6px;top:587.5px;font-size:25.3px;font-weight:700;-webkit-text-stroke:0.7px;"><span style="color:#575757;-webkit-text-stroke-color:#575757;letter-spacing:-0.3px">Docu</span><span style="color:#bfbfbf;-webkit-text-stroke-color:#bfbfbf;letter-spacing:0.25px">neering</span></div>
<svg width="1377" height="941" style="left:0;top:0;"><path d="M1112 194.3 L1197 195.2 L1195 201 Z" fill="#585858"/><path d="M745 616 L833.2 616.4 L831 622.8 Z" fill="#585858"/></svg>
<div class="t" style="left:666.0px;top:875.8px;font-size:8.54px;color:#000;transform:translate(-50%,-50%) rotate(-90deg);">Produced by Docuneering Ltd</div>
</body></html>
